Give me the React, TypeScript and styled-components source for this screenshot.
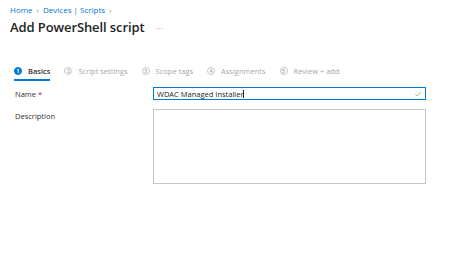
import styled, { createGlobalStyle } from "styled-components";

const GlobalStyle = createGlobalStyle`
  html, body {
    margin: 0;
    padding: 0;
    background: #ffffff;
    font-family: "Open Sans", "Noto Sans", sans-serif;
    color: #323130;
  }
`;

const steps = ["Basics", "Script settings", "Scope tags", "Assignments", "Review + add"];

export default function App() {
  return (
    <>
      <GlobalStyle />
      <Page>
        <Breadcrumb>
          <Crumb>Home</Crumb>
          <Sep>›</Sep>
          <Crumb>Devices | Scripts</Crumb>
          <Sep>›</Sep>
        </Breadcrumb>

        <TitleRow>
          <Title>Add PowerShell script</Title>
          <More>...</More>
        </TitleRow>

        <Steps>
          {steps.map((s, i) => (
            <Step key={s} $active={i === 0}>
              <StepNum $active={i === 0}>{i + 1}</StepNum>
              <StepLabel $active={i === 0}>{s}</StepLabel>
            </Step>
          ))}
        </Steps>

        <Form>
          <Label>
            Name <Req>*</Req>
          </Label>
          <InputBox>
            <InputText>WDAC Managed Installer</InputText>
            <Caret />
            <Check viewBox="0 0 10 10">
              <path d="M1.5 5.2 L4 7.6 L8.6 2.4" fill="none" stroke="#8cbd5a" strokeWidth="1.1" />
            </Check>
          </InputBox>

          <Label>Description</Label>
          <TextArea />
        </Form>
      </Page>
    </>
  );
}

const Page = styled.div`
  width: 474px;
  height: 268px;
  box-sizing: border-box;
  padding: 4px 10px 0 10px;
`;

const Breadcrumb = styled.div`
  display: flex;
  align-items: center;
  gap: 4px;
  height: 11px;
  font-size: 8px;
`;

const Crumb = styled.span`
  color: #0078d4;
`;

const Sep = styled.span`
  color: #8a8886;
  font-size: 8px;
`;

const TitleRow = styled.div`
  display: flex;
  align-items: center;
  gap: 12px;
  margin-top: 2px;
  height: 20px;
`;

const Title = styled.h1`
  margin: 0;
  font-size: 13px;
  font-weight: 600;
  color: #201f1e;
  letter-spacing: -0.1px;
`;

const More = styled.span`
  font-size: 7px;
  letter-spacing: 0.5px;
  color: #8a8886;
  padding-bottom: 1px;
`;

const Steps = styled.div`
  display: flex;
  gap: 14px;
  margin-top: 28px;
  padding-left: 4px;
`;

const Step = styled.div<{ $active?: boolean }>`
  display: flex;
  align-items: center;
  gap: 6px;
  height: 12px;
  padding-bottom: 2px;
  border-bottom: 2px solid ${({ $active }) => ($active ? "#0078d4" : "transparent")};
`;

const StepNum = styled.span<{ $active?: boolean }>`
  width: 8px;
  height: 8px;
  border-radius: 50%;
  box-sizing: border-box;
  display: flex;
  align-items: center;
  justify-content: center;
  font-size: 5px;
  font-weight: 700;
  background: ${({ $active }) => ($active ? "#0078d4" : "#fff")};
  color: ${({ $active }) => ($active ? "#fff" : "#b3b0ad")};
  border: 1px solid ${({ $active }) => ($active ? "#0078d4" : "#c8c6c4")};
`;

const StepLabel = styled.span<{ $active?: boolean }>`
  font-size: 7.5px;
  font-weight: ${({ $active }) => ($active ? 600 : 400)};
  color: ${({ $active }) => ($active ? "#323130" : "#a8a6a4")};
`;

const Form = styled.div`
  display: grid;
  grid-template-columns: 138px 273px;
  row-gap: 9px;
  margin-top: 6px;
  padding-left: 5px;
`;

const Label = styled.div`
  font-size: 7.5px;
  color: #323130;
  padding-top: 2px;
`;

const Req = styled.span`
  color: #a4262c;
`;

const InputBox = styled.div`
  height: 13px;
  box-sizing: border-box;
  border: 1px solid #0078d4;
  display: flex;
  align-items: center;
  padding: 0 3px;
`;

const InputText = styled.span`
  font-size: 7.5px;
  color: #201f1e;
`;

const Caret = styled.span`
  width: 1px;
  height: 8px;
  background: #201f1e;
`;

const Check = styled.svg`
  width: 8px;
  height: 8px;
  margin-left: auto;
`;

const TextArea = styled.div`
  height: 75px;
  box-sizing: border-box;
  border: 1px solid #c8c6c4;
`;
